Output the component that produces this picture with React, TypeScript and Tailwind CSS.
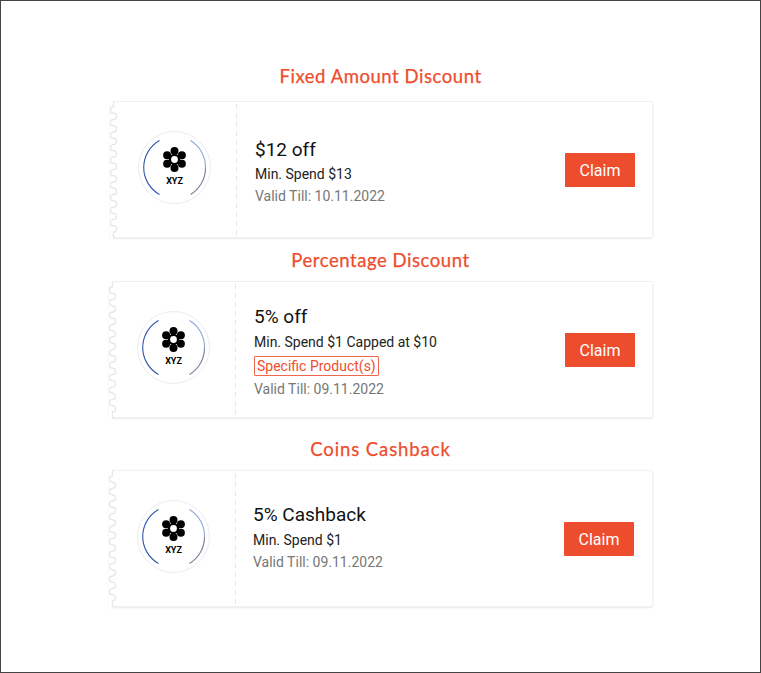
const ROBOTO = "font-['Roboto',sans-serif]";

function ScallopEdge() {
  // wavy left edge, replaces the card's left border
  let d = "M5 0.5 C2.5 0.5 3.5 3 3.5 6";
  for (let i = 0; i < 10; i++) {
    d += " a3 3 0 0 0 0 6.25 a3 3 0 0 1 0 6.25";
  }
  d += " C3.5 134 2.5 136.5 5 136.5";
  return (
    <svg className="absolute -left-px -top-px" width="10" height="138" viewBox="0 0 10 138" fill="none">
      <rect x="0" y="0" width="3" height="138" fill="#ffffff" />
      <path d={d} stroke="#e8e8e8" strokeWidth="1.3" />
    </svg>
  );
}

function Logo() {
  const petals = [0, 60, 120, 180, 240, 300];
  return (
    <div className="relative flex h-[73px] w-[73px] shrink-0 flex-col items-center rounded-full border border-[#ececf1] bg-white pt-[15px]">
      <svg className="absolute left-0 top-0" width="71" height="71" viewBox="0 0 71 71" fill="none">
        <path d="M20.5 8.5 A31 31 0 0 0 20.5 62.5" stroke="#2f55ae" strokeWidth="1.1" />
        <path d="M51.5 8.5 A31 31 0 0 1 66.5 35.5" stroke="#8ba5da" strokeWidth="1.1" />
        <path d="M66.5 35.5 A31 31 0 0 1 51.5 62.5" stroke="#7c7f9c" strokeWidth="1.1" />
      </svg>
      <svg width="25" height="25" viewBox="0 0 25 25">
        {petals.map((a) => (
          <circle
            key={a}
            cx={12.5 + 8.5 * Math.sin((a * Math.PI) / 180)}
            cy={12.5 - 8.5 * Math.cos((a * Math.PI) / 180)}
            r="4"
            fill="#000"
          />
        ))}
        <circle cx="12.5" cy="12.5" r="5.8" fill="#000" />
        <circle cx="12.5" cy="12.5" r="3.4" fill="#fff" />
      </svg>
      <span className={`mt-[4px] text-[9px] font-bold leading-[10px] text-black ${ROBOTO}`}>XYZ</span>
    </div>
  );
}

type Coupon = {
  title: string;
  amount: string;
  minSpend: string;
  valid: string;
  tag?: string;
  titleClass: string;
  cardClass: string;
  textClass: string;
  minClass: string;
  validClass: string;
  btnClass: string;
};

const coupons: Coupon[] = [
  {
    title: "Fixed Amount Discount",
    amount: "$12 off",
    minSpend: "Min. Spend $13",
    valid: "Valid Till: 10.11.2022",
    titleClass: "mt-[52px] h-[48px] tracking-[0.55px]",
    cardClass: "ml-[109px] w-[543px]",
    textClass: "pl-[18px] pt-[4px]",
    minClass: "mt-[1px]",
    validClass: "mt-[2px]",
    btnClass: "mr-[17px]",
  },
  {
    title: "Percentage Discount",
    amount: "5% off",
    minSpend: "Min. Spend $1 Capped at $10",
    valid: "Valid Till: 09.11.2022",
    tag: "Specific Product(s)",
    titleClass: "mt-[3px] h-[40px] tracking-[0.55px]",
    cardClass: "ml-[108px] w-[544px]",
    textClass: "pl-[18px] pt-[3px]",
    minClass: "mt-[2px]",
    validClass: "mt-[3px]",
    btnClass: "mr-[17px]",
  },
  {
    title: "Coins Cashback",
    amount: "5% Cashback",
    minSpend: "Min. Spend $1",
    valid: "Valid Till: 09.11.2022",
    titleClass: "mt-[12px] h-[40px] tracking-[0.9px]",
    cardClass: "ml-[108px] w-[544px]",
    textClass: "pl-[17px] pb-[3px]",
    minClass: "mt-[2px]",
    validClass: "mt-[2px]",
    btnClass: "mr-[18px]",
  },
];

function CouponCard({ c }: { c: Coupon }) {
  return (
    <>
      <h2
        className={`flex items-center justify-center text-[18.5px] font-normal text-[#ee4d2d] [-webkit-text-stroke:0.25px_#ee4d2d] font-['Lato',sans-serif] ${c.titleClass}`}
      >
        {c.title}
      </h2>
      <div
        className={`relative flex h-[137px] items-center rounded-[2px] border border-[#f1f1f1] bg-white shadow-[0_1px_2px_rgba(0,0,0,0.09)] ${c.cardClass}`}
      >
        <ScallopEdge />
        <div className="flex h-full w-[125px] shrink-0 items-center justify-center">
          <div className="mb-[4px] ml-[2px]">
            <Logo />
          </div>
        </div>
        <div className="h-[131px] w-px shrink-0 bg-[repeating-linear-gradient(to_bottom,#e4e6ee_0,#e4e6ee_5px,transparent_5px,transparent_9px)]" />
        <div className={`flex flex-1 flex-col items-start ${ROBOTO} ${c.textClass}`}>
          <div className="text-[19px] leading-[26px] text-[#111]">{c.amount}</div>
          <div className={`text-[14px] leading-[20px] text-[#222] ${c.minClass}`}>{c.minSpend}</div>
          {c.tag && (
            <div className="mt-[4px] rounded-[1px] border border-[#f0684c] px-[2px] text-[14px] leading-[18px] text-[#ee4d2d]">
              {c.tag}
            </div>
          )}
          <div className={`text-[14px] leading-[20px] text-[#777] ${c.validClass}`}>{c.valid}</div>
        </div>
        <button
          className={`flex h-[34px] w-[70px] shrink-0 items-center justify-center rounded-[1px] bg-[#ee4d2d] pt-[2px] text-[16px] text-white ${ROBOTO} ${c.btnClass}`}
        >
          Claim
        </button>
      </div>
    </>
  );
}

export default function App() {
  return (
    <div className="h-[673px] w-[761px] overflow-hidden border border-[#444] bg-white">
      {coupons.map((c) => (
        <CouponCard key={c.title} c={c} />
      ))}
    </div>
  );
}
